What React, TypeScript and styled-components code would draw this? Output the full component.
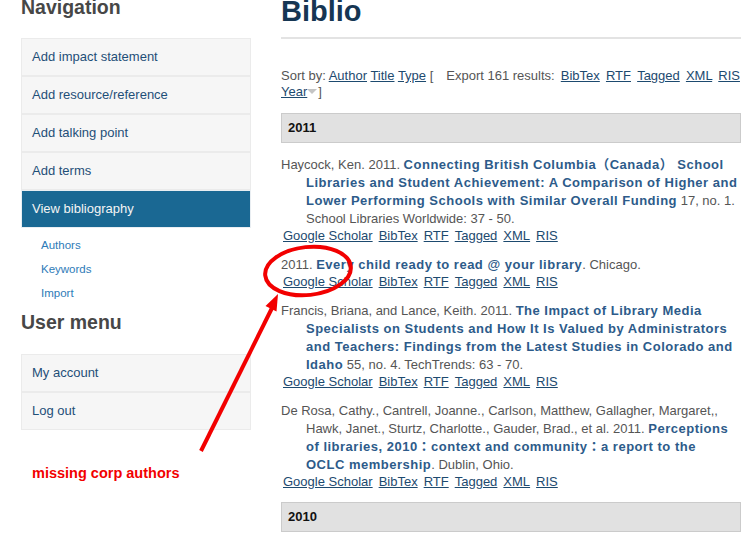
import React from 'react';
import styled, { createGlobalStyle } from 'styled-components';

const Global = createGlobalStyle`
  html, body { margin: 0; padding: 0; background: #fff; }
  body {
    font-family: "Liberation Sans", Arial, "Noto Sans CJK JP", sans-serif;
    font-size: 13px;
    color: #555;
  }
`;

const Viewport = styled.div`
  position: relative;
  width: 748px;
  height: 536px;
  overflow: hidden;
`;

const Page = styled.div`
  display: flex;
  gap: 30px;
  padding: 0 7px 0 21px;
  box-sizing: border-box;
  width: 748px;
`;

const Sidebar = styled.aside`
  width: 230px;
  flex: none;
  display: flex;
  flex-direction: column;
`;

const BlockTitle = styled.h2<{ $top: number; $bottom: number }>`
  margin: ${(p) => p.$top}px 0 ${(p) => p.$bottom}px;
  font-size: 19.5px;
  line-height: 24px;
  font-weight: bold;
  color: #474747;
`;

const Menu = styled.ul`
  list-style: none;
  margin: 0;
  padding: 0;
`;

const MenuItem = styled.li<{ $active?: boolean }>`
  height: 38px;
  box-sizing: border-box;
  border: 1px solid ${(p) => (p.$active ? '#e9eef2' : '#ebebeb')};
  background: ${(p) => (p.$active ? '#1a6893' : '#f6f6f6')};
  padding: 9px 10px;
  line-height: 18px;
  font-size: 13px;
  color: ${(p) => (p.$active ? '#f4f4f4' : '#1f4f78')};
`;

const SubMenu = styled.ul`
  list-style: none;
  margin: 0;
  padding: 5px 0 0 20px;
`;

const SubItem = styled.li`
  line-height: 24px;
  font-size: 11.5px;
  color: #2e7bb8;
`;

const Note = styled.div`
  margin-top: 34px;
  padding-left: 11px;
  font-size: 14.5px;
  line-height: 18px;
  font-weight: bold;
  color: #f20000;
`;

const Main = styled.main`
  width: 460px;
  flex: none;
`;

const PageTitle = styled.h1`
  margin: -6px 0 9px;
  font-size: 29px;
  line-height: 34px;
  font-weight: bold;
  color: #163653;
`;

const Rule = styled.hr`
  margin: 0;
  border: none;
  border-top: 2px solid #e3e3e3;
  height: 0;
`;

const SortBar = styled.p`
  margin: 29px 0 13px;
  line-height: 16px;
  color: #555;
`;

const Link = styled.a`
  color: #1d4a6f;
  text-decoration: underline;
  cursor: pointer;
`;

const Export = styled.span`
  margin-left: 13px;
`;

const ExportLink = styled(Link)`
  margin-left: 2.5px;
`;

const SortArrow = styled.span`
  display: inline-block;
  width: 0;
  height: 0;
  border-left: 5px solid transparent;
  border-right: 5px solid transparent;
  border-top: 5px solid #c4c4c4;
  vertical-align: middle;
  margin: 0 1px 2px 0;
`;

const YearHeader = styled.div`
  height: 30px;
  box-sizing: border-box;
  border: 1px solid #cbcbcb;
  background: #e1e1e1;
  padding: 0 6px;
  line-height: 28px;
  font-weight: bold;
  font-size: 13px;
  color: #111;
  margin-bottom: 13px;
`;

const Entry = styled.div`
  margin-bottom: 13px;
`;

const Citation = styled.div`
  line-height: 18px;
  padding-left: 25px;
  text-indent: -25px;
  color: #555;
`;

const Title = styled.span`
  font-weight: bold;
  letter-spacing: 0.5px;
  color: #2d5b8a;
`;

const Exports = styled.div`
  display: flex;
  gap: 6px;
  padding-left: 2px;
  line-height: 15px;
`;

const Overlay = styled.svg`
  position: absolute;
  left: 0;
  top: 0;
  pointer-events: none;
`;

const navItems = ['Add impact statement', 'Add resource/reference', 'Add talking point', 'Add terms'];
const exportsList = ['Google Scholar', 'BibTex', 'RTF', 'Tagged', 'XML', 'RIS'];

type Cite = { before: string; title: string; after: string };

const entries: Cite[] = [
  {
    before: 'Haycock, Ken. 2011. ',
    title:
      'Connecting British Columbia（Canada） School Libraries and Student Achievement: A Comparison of Higher and Lower Performing Schools with Similar Overall Funding',
    after: ' 17, no. 1. School Libraries Worldwide: 37 - 50.',
  },
  { before: '2011. ', title: 'Every child ready to read @ your library', after: '. Chicago.' },
  {
    before: 'Francis, Briana, and Lance, Keith. 2011. ',
    title:
      'The Impact of Library Media Specialists on Students and How It Is Valued by Administrators and Teachers: Findings from the Latest Studies in Colorado and Idaho',
    after: ' 55, no. 4. TechTrends: 63 - 70.',
  },
  {
    before:
      'De Rosa, Cathy., Cantrell, Joanne., Carlson, Matthew, Gallagher, Margaret,, Hawk, Janet., Sturtz, Charlotte., Gauder, Brad., et al. 2011. ',
    title: 'Perceptions of libraries, 2010：context and community：a report to the OCLC\u00a0membership',
    after: '. Dublin, Ohio.',
  },
];

export default function App() {
  return (
    <Viewport>
      <Global />
      <Page>
        <Sidebar>
          <BlockTitle $top={-5} $bottom={19}>Navigation</BlockTitle>
          <Menu>
            {navItems.map((t) => (
              <MenuItem key={t}>{t}</MenuItem>
            ))}
            <MenuItem $active>View bibliography</MenuItem>
          </Menu>
          <SubMenu>
            <SubItem>Authors</SubItem>
            <SubItem>Keywords</SubItem>
            <SubItem>Import</SubItem>
          </SubMenu>
          <BlockTitle $top={5} $bottom={20}>User menu</BlockTitle>
          <Menu>
            <MenuItem>My account</MenuItem>
            <MenuItem>Log out</MenuItem>
          </Menu>
          <Note>missing corp authors</Note>
        </Sidebar>
        <Main>
          <PageTitle>Biblio</PageTitle>
          <Rule />
          <SortBar>
            Sort by: <Link>Author</Link> <Link>Title</Link> <Link>Type</Link> [
            <Export>Export 161 results: </Export>
            <ExportLink>BibTex</ExportLink> <ExportLink>RTF</ExportLink> <ExportLink>Tagged</ExportLink>{' '}
            <ExportLink>XML</ExportLink> <ExportLink>RIS</ExportLink> <Link>Year</Link>
            <SortArrow />]
          </SortBar>
          <YearHeader>2011</YearHeader>
          {entries.map((e, i) => (
            <Entry key={i}>
              <Citation>
                {e.before}
                <Title>{e.title}</Title>
                {e.after}
              </Citation>
              <Exports>
                {exportsList.map((x) => (
                  <Link key={x}>{x}</Link>
                ))}
              </Exports>
            </Entry>
          ))}
          <YearHeader>2010</YearHeader>
        </Main>
      </Page>
      <Overlay width="748" height="536" viewBox="0 0 748 536">
        <ellipse
          cx="308"
          cy="271"
          rx="43"
          ry="24"
          transform="rotate(-6 308 271)"
          fill="none"
          stroke="#f20000"
          strokeWidth="4"
        />
        <line x1="201" y1="451" x2="272" y2="308" stroke="#f20000" strokeWidth="4" />
        <polygon points="278,294 276.5,311.5 265.5,306" fill="#f20000" />
      </Overlay>
    </Viewport>
  );
}
